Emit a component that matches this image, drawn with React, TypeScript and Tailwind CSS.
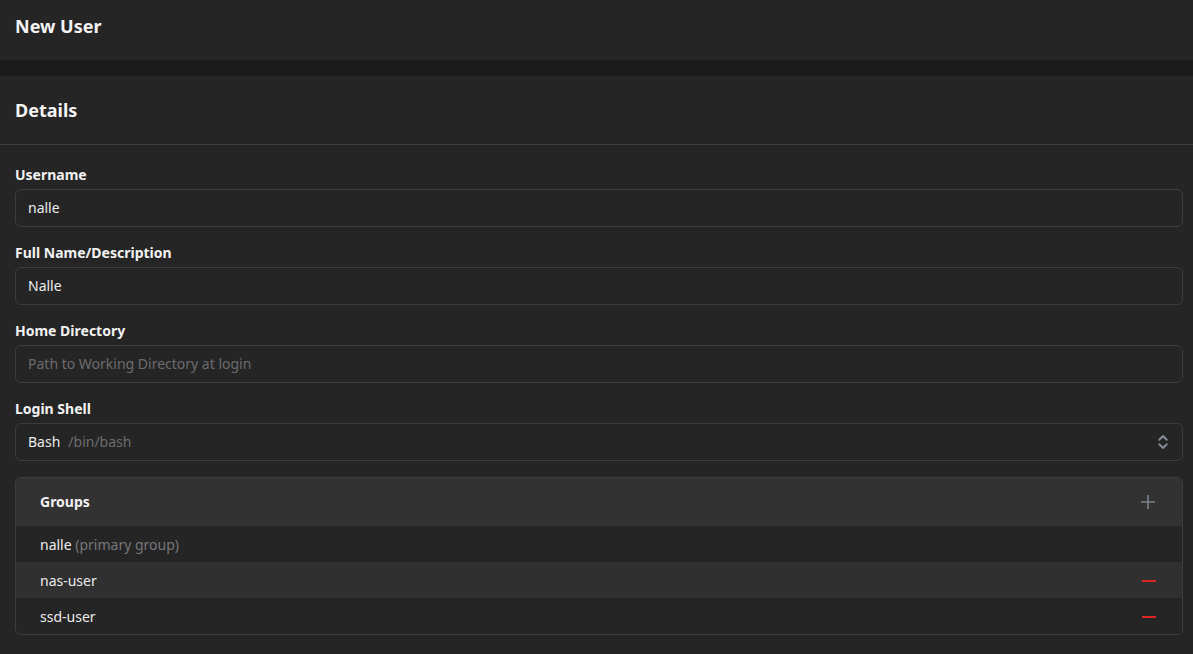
import { ChevronsUpDown } from 'lucide-react';

const groups = [
    { name: 'nalle', primary: true },
    { name: 'nas-user', primary: false },
    { name: 'ssd-user', primary: false },
];

const Field: React.FC<{ label: string; value?: string; placeholder?: string }> = ({ label, value, placeholder }) => (
    <div className="mb-4">
        <label className="block text-sm leading-5 font-bold text-[#f2f2f2] mb-1">{label}</label>
        <div className="h-[38px] flex items-center px-3 rounded-md border border-[#3d3d3d] bg-[#252525] text-sm">
            {value ? (
                <span className="text-[#ececec]">{value}</span>
            ) : (
                <span className="text-[#6c6c70]">{placeholder}</span>
            )}
        </div>
    </div>
);

export default function App() {
    return (
        <div className="min-h-[654px] bg-[#252525] font-['Noto_Sans',sans-serif]">
            {/* Page header */}
            <div className="h-[60px] pt-[12px] px-[15px]">
                <h1 className="text-lg leading-7 font-bold text-[#f4f4f4]">New User</h1>
            </div>
            <div className="h-4 bg-[#1a1a1a]" />

            {/* Details card */}
            <div className="h-[69px] flex items-center px-[15px] border-b border-[#3f3f3f]">
                <h2 className="text-lg font-bold text-[#f4f4f4]">Details</h2>
            </div>

            <div className="pt-5 pl-[15px] pr-[10px]">
                <Field label="Username" value="nalle" />
                <Field label="Full Name/Description" value="Nalle" />
                <Field label="Home Directory" placeholder="Path to Working Directory at login" />

                <div className="mb-4">
                    <label className="block text-sm leading-5 font-bold text-[#f2f2f2] mb-1">Login Shell</label>
                    <div className="h-[38px] flex items-center justify-between pl-3 pr-[10px] rounded-md border border-[#3d3d3d] bg-[#252525] text-sm">
                        <span>
                            <span className="text-[#ececec]">Bash</span>
                            <span className="text-[#6c6c70] ml-2">/bin/bash</span>
                        </span>
                        <ChevronsUpDown size={18} strokeWidth={2.5} className="text-[#858a94]" />
                    </div>
                </div>

                {/* Groups */}
                <div className="rounded-md border border-[#3d3d3d] overflow-hidden">
                    <div className="h-12 flex items-center justify-between pl-6 pr-[26px] bg-[#323232]">
                        <span className="text-sm font-bold text-[#f2f2f2]">Groups</span>
                        <svg width="16" height="16" viewBox="0 0 16 16" className="text-[#7c818b]">
                            <path d="M8 1v14M1 8h14" stroke="currentColor" strokeWidth="1.6" />
                        </svg>
                    </div>
                    {groups.map((g, i) => (
                        <div
                            key={g.name}
                            className={`h-9 pt-px flex items-center justify-between pl-6 pr-[26px] text-sm ${i % 2 === 1 ? 'bg-[#303030]' : 'bg-[#252525]'}`}
                        >
                            <span className="text-[#ececec]">
                                {g.name}
                                {g.primary && <span className="text-[#77777b]"> (primary group)</span>}
                            </span>
                            {!g.primary && <span className="block w-[14px] h-[2px] bg-[#dc2626]" />}
                        </div>
                    ))}
                </div>
            </div>
        </div>
    );
}
